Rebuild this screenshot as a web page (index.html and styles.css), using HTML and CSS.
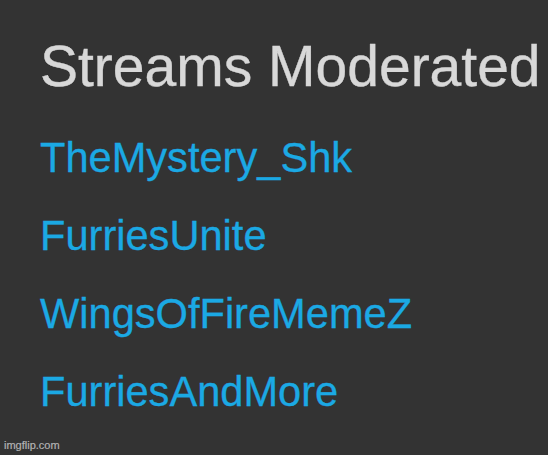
FILE: index.html
```html
<!DOCTYPE html>
<html>
<head>
<meta charset="utf-8">
<link rel="stylesheet" href="styles.css">
</head>
<body>
<main class="panel">
  <h1 class="title">Streams Moderated</h1>
  <ul class="streams">
    <li><a class="stream" href="#">TheMystery_Shk</a></li>
    <li><a class="stream" href="#">FurriesUnite</a></li>
    <li><a class="stream" href="#">WingsOfFireMemeZ</a></li>
    <li><a class="stream" href="#">FurriesAndMore</a></li>
  </ul>
</main>
<div class="watermark">imgflip.com</div>
</body>
</html>
```
FILE: styles.css
```css
html, body {
  margin: 0;
  padding: 0;
  width: 548px;
  height: 455px;
  background: #333333;
  overflow: hidden;
}
body {
  position: relative;
  font-family: "Liberation Sans", Arial, sans-serif;
}
.panel {
  padding: 34px 0 0 40px;
}
.title {
  margin: 0;
  font-size: 57px;
  line-height: 64px;
  font-weight: normal;
  color: #d8d8d8;
  white-space: nowrap;
  -webkit-text-stroke: 0.4px #d8d8d8;
}
.streams {
  list-style: none;
  margin: 21px 0 0 0;
  padding: 0;
}
.streams li {
  font-size: 41.6px;
  line-height: 78px;
  white-space: nowrap;
}
.stream {
  color: #1ba9e4;
  text-decoration: none;
  -webkit-text-stroke: 0.3px #1ba9e4;
}
.watermark {
  position: absolute;
  left: 4px;
  bottom: 3px;
  font-size: 11px;
  line-height: 13px;
  color: #b4b4b4;
  -webkit-text-stroke: 0.2px #b4b4b4;
}
```
